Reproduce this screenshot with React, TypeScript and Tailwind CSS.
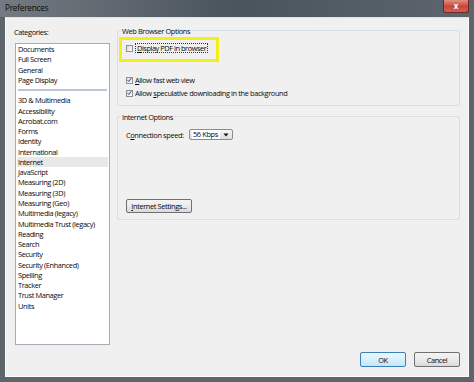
import React from "react";

const F = { fontFamily: '"Open Sans", "Noto Sans", sans-serif' };

function U({ children }: { children: React.ReactNode }) {
  return <span className="underline underline-offset-[1px] decoration-[0.5px]">{children}</span>;
}

function CheckBox({ checked }: { checked?: boolean }) {
  return (
    <div className="w-[7px] h-[7px] border border-[#8e8f8f] bg-gradient-to-br from-[#d8dadc] to-[#ffffff] flex items-center justify-center shrink-0">
      {checked && (
        <svg width="6" height="6" viewBox="0 0 6 6">
          <path d="M0.8 3.2 L2.3 4.8 L5.2 0.8" stroke="#2a3f6a" strokeWidth="1.1" fill="none" />
        </svg>
      )}
    </div>
  );
}

const categories1 = ["Documents", "Full Screen", "General", "Page Display"];
const categories2 = [
  "3D & Multimedia",
  "Accessibility",
  "Acrobat.com",
  "Forms",
  "Identity",
  "International",
  "Internet",
  "JavaScript",
  "Measuring (2D)",
  "Measuring (3D)",
  "Measuring (Geo)",
  "Multimedia (legacy)",
  "Multimedia Trust (legacy)",
  "Reading",
  "Search",
  "Security",
  "Security (Enhanced)",
  "Spelling",
  "Tracker",
  "Trust Manager",
  "Units",
];

export default function App() {
  return (
    <div
      className="w-[474px] h-[382px] flex flex-col bg-[#5d646b] text-[7.4px] tracking-[-0.38px] text-[#0a0a0a]"
      style={F}
    >
      {/* Title bar */}
      <div className="h-[17px] flex items-start bg-gradient-to-r from-[#737a81] via-[#4a545d] to-[#5d666e] shrink-0">
        <div className="pl-[5px] pt-[3px] leading-[10px] text-[8.2px] tracking-[-0.2px] text-[#0a0a0a]">Preferences</div>
        <div className="flex-1" />
        <div className="w-[26px] h-[13px] mr-[5px] rounded-b-[3px] bg-gradient-to-b from-[#e3907f] via-[#c8463a] to-[#d2614e] border border-[#6e2a22] border-t-0 flex items-center justify-center text-white text-[8px] font-bold leading-none tracking-normal">
          x
        </div>
      </div>

      {/* Body */}
      <div className="flex-1 mx-[5px] bg-[#f0f0f0] border border-white border-t-[#dfe3e6] flex flex-col pt-[9px] pl-[8px] pr-[8px]">
        <div className="flex">
          {/* Left column */}
          <div className="w-[96px] flex flex-col">
            <div className="h-[10px] leading-[10px]">Categories:</div>
            <div className="mt-[6px] ml-[1px] w-[95px] h-[302px] bg-white border border-[#a5acb5] flex flex-col pl-[1px] pr-[1px] leading-[10.27px]">
              {categories1.map((c) => (
                <div key={c} className="h-[10.27px] pl-[1px] whitespace-nowrap">{c}</div>
              ))}
              <div className="h-[10.27px] flex items-center px-[1px]">
                <div className="w-full h-[2px] bg-[#b9c7d8]" />
              </div>
              {categories2.map((c) => (
                <div
                  key={c}
                  className={
                    "h-[10.27px] pl-[1px] whitespace-nowrap " + (c === "Internet" ? "bg-[#e8e8e8]" : "")
                  }
                >
                  {c}
                </div>
              ))}
            </div>
          </div>

          {/* Right column */}
          <div className="ml-[7px] w-[343px] flex flex-col">
            {/* Group 1 */}
            <div className="relative mt-[3px] h-[76px] border border-[#d5dfe5] rounded-[2px] flex flex-col">
              <div className="-mt-[5px] ml-[3px] px-[1px] self-start bg-[#f0f0f0] h-[10px] leading-[10px]">
                Web Browser Options
              </div>
              <div className="mt-[7px] ml-[8px] h-[10px] flex items-center gap-[2px]">
                <CheckBox />
                <span className="leading-[8px] border border-dotted border-[#333] px-[1px] whitespace-nowrap tracking-[-0.45px]">
                  <U>D</U>isplay PDF in browser
                </span>
              </div>
              <div className="mt-[22px] ml-[8px] h-[10px] flex items-center gap-[2px]">
                <CheckBox checked />
                <span className="leading-[10px] whitespace-nowrap">
                  <U>A</U>llow fast web view
                </span>
              </div>
              <div className="mt-[3px] ml-[8px] h-[10px] flex items-center gap-[2px]">
                <CheckBox checked />
                <span className="leading-[10px] whitespace-nowrap">
                  Allow <U>s</U>peculative downloading in the background
                </span>
              </div>
              {/* highlight annotation */}
              <div className="absolute left-[1px] top-[6px] w-[100px] h-[25px] border-[3px] border-[#f2ee1a]" />
            </div>

            {/* Group 2 */}
            <div className="mt-[10px] h-[104px] border border-[#d5dfe5] rounded-[2px] flex flex-col">
              <div className="-mt-[5px] ml-[3px] px-[1px] self-start bg-[#f0f0f0] h-[10px] leading-[10px]">
                Internet Options
              </div>
              <div className="mt-[7px] ml-[8px] flex items-center">
                <span className="w-[63px] leading-[10px] whitespace-nowrap">
                  C<U>o</U>nnection speed:
                </span>
                <div className="w-[44px] h-[11px] border border-[#8c8c8c] rounded-[2px] bg-gradient-to-b from-[#f6f6f6] to-[#dedede] flex items-center pl-[2px] pr-[3px]">
                  <span className="flex-1 leading-[9px] bg-white pl-[1px] whitespace-nowrap">56 Kbps</span>
                  <svg width="6" height="4" viewBox="0 0 6 4" className="ml-[3px] shrink-0">
                    <path d="M0.5 0.5 L5.5 0.5 L3 3.5 Z" fill="#111" />
                  </svg>
                </div>
              </div>
              <div className="mt-[59px] ml-[8px] w-[66px] h-[14px] border border-[#707070] rounded-[2px] bg-gradient-to-b from-[#f4f4f4] via-[#ebebeb] to-[#d9d9d9] flex items-center justify-center leading-[10px]">
                <span className="whitespace-nowrap">
                  <U>I</U>nternet Settings...
                </span>
              </div>
            </div>
          </div>
        </div>

        {/* Buttons */}
        <div className="mt-[7px] flex justify-end gap-[8px]">
          <div className="w-[46px] h-[15px] border border-[#3c7fb1] rounded-[2px] bg-gradient-to-b from-[#eaf6fd] via-[#d9f0fc] to-[#bee6fd] flex items-center justify-center leading-[10px]">
            OK
          </div>
          <div className="w-[46px] h-[15px] border border-[#707070] rounded-[2px] bg-gradient-to-b from-[#f4f4f4] via-[#ebebeb] to-[#d9d9d9] flex items-center justify-center leading-[10px]">
            Cancel
          </div>
        </div>
      </div>
      <div className="h-[5px] shrink-0" />
    </div>
  );
}
